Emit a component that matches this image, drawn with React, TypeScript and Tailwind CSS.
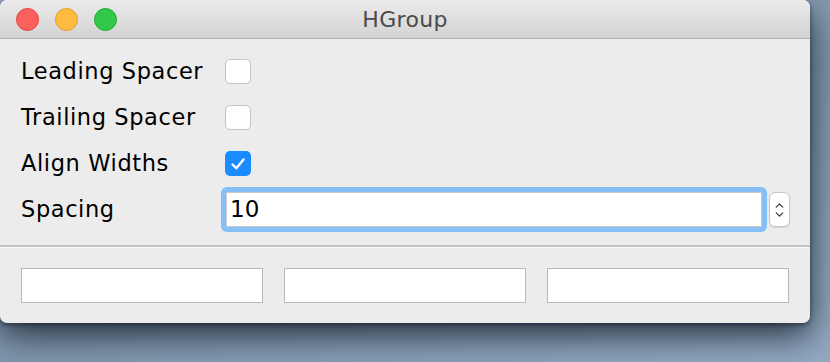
import { ChevronDown, ChevronUp } from 'lucide-react';

const font = { fontFamily: '"DejaVu Sans", "Liberation Sans", sans-serif' };

const rows = [
  { label: 'Leading Spacer', checked: false },
  { label: 'Trailing Spacer', checked: false },
  { label: 'Align Widths', checked: true },
];

function Checkbox({ checked }: { checked: boolean }) {
  if (checked) {
    return (
      <div className="w-[26px] h-[25px] rounded-[5px] bg-[#1a8cff] flex items-center justify-center">
        <svg width="16" height="14" viewBox="0 0 16 14">
          <path d="M2.5 7.5 L6.3 11.2 L13.5 2.5" fill="none" stroke="white" strokeWidth="2.4" strokeLinecap="round" strokeLinejoin="round" />
        </svg>
      </div>
    );
  }
  return <div className="w-[26px] h-[25px] rounded-[5px] bg-white border border-[#c4c4c4]" />;
}

export default function App() {
  return (
    <div className="w-[830px] h-[362px] overflow-hidden bg-[linear-gradient(160deg,#9ab0c7_0%,#8198ae_55%,#93aac2_100%)]" style={font}>
      <div className="w-[810px] h-[323px] rounded-[7px] overflow-hidden bg-[#ececec] flex flex-col shadow-[0_12px_34px_rgba(30,40,55,0.95),0_2px_4px_rgba(0,0,0,0.5)]">
        {/* title bar */}
        <div className="h-[39px] shrink-0 flex items-center relative bg-[linear-gradient(#ebebeb,#d3d3d3)] border-b border-[#b1b1b1]">
          <div className="flex gap-[16px] pl-[16px]">
            <div className="w-[23px] h-[23px] rounded-full bg-[#fc605c] border border-[#e0443e]" />
            <div className="w-[23px] h-[23px] rounded-full bg-[#fdbc40] border border-[#dea123]" />
            <div className="w-[23px] h-[23px] rounded-full bg-[#34c84a] border border-[#1aab29]" />
          </div>
          <div className="absolute inset-0 flex items-center justify-center text-[22px] text-[#4a4a4a] pt-[1px] tracking-[0.3px]">HGroup</div>
        </div>

        {/* form */}
        <div className="flex flex-col pl-[21px] pt-[20px] gap-[21px]">
          {rows.map((r) => (
            <div key={r.label} className="flex items-center h-[25px]">
              <span className="w-[204px] text-[22.5px] tracking-[0.6px] text-black">{r.label}</span>
              <Checkbox checked={r.checked} />
            </div>
          ))}
          <div className="flex items-center h-[45px] -mt-[10px]">
            <span className="w-[200px] text-[22.5px] tracking-[0.6px] text-black">Spacing</span>
            <div className="w-[546px] h-[45px] rounded-[6px] bg-[#86bff6] p-[5px]">
              <div className="w-full h-full bg-white border border-[#c9c9c9] flex items-center pl-[3px] text-[23px] text-black">10</div>
            </div>
            <div className="ml-[2px] w-[21px] h-[35px] bg-white rounded-[6px] border border-[#c8c8c8] shadow-[0_1px_1px_rgba(0,0,0,0.1)] flex flex-col items-center justify-center">
              <ChevronUp size={13} strokeWidth={2.4} className="text-[#3a3a3a] -mb-[2px]" />
              <ChevronDown size={13} strokeWidth={2.4} className="text-[#3a3a3a] -mt-[2px]" />
            </div>
          </div>
        </div>

        {/* separator */}
        <div className="mt-[13px] h-[2px] bg-[#c2c2c2]" />
        <div className="h-[1px] bg-[#f8f8f8]" />

        {/* bottom fields */}
        <div className="flex gap-[21px] px-[21px] pt-[20px]">
          <div className="w-[242px] h-[35px] bg-white border border-[#b9b9b9]" />
          <div className="w-[242px] h-[35px] bg-white border border-[#b9b9b9]" />
          <div className="w-[242px] h-[35px] bg-white border border-[#b9b9b9]" />
        </div>
      </div>
    </div>
  );
}
